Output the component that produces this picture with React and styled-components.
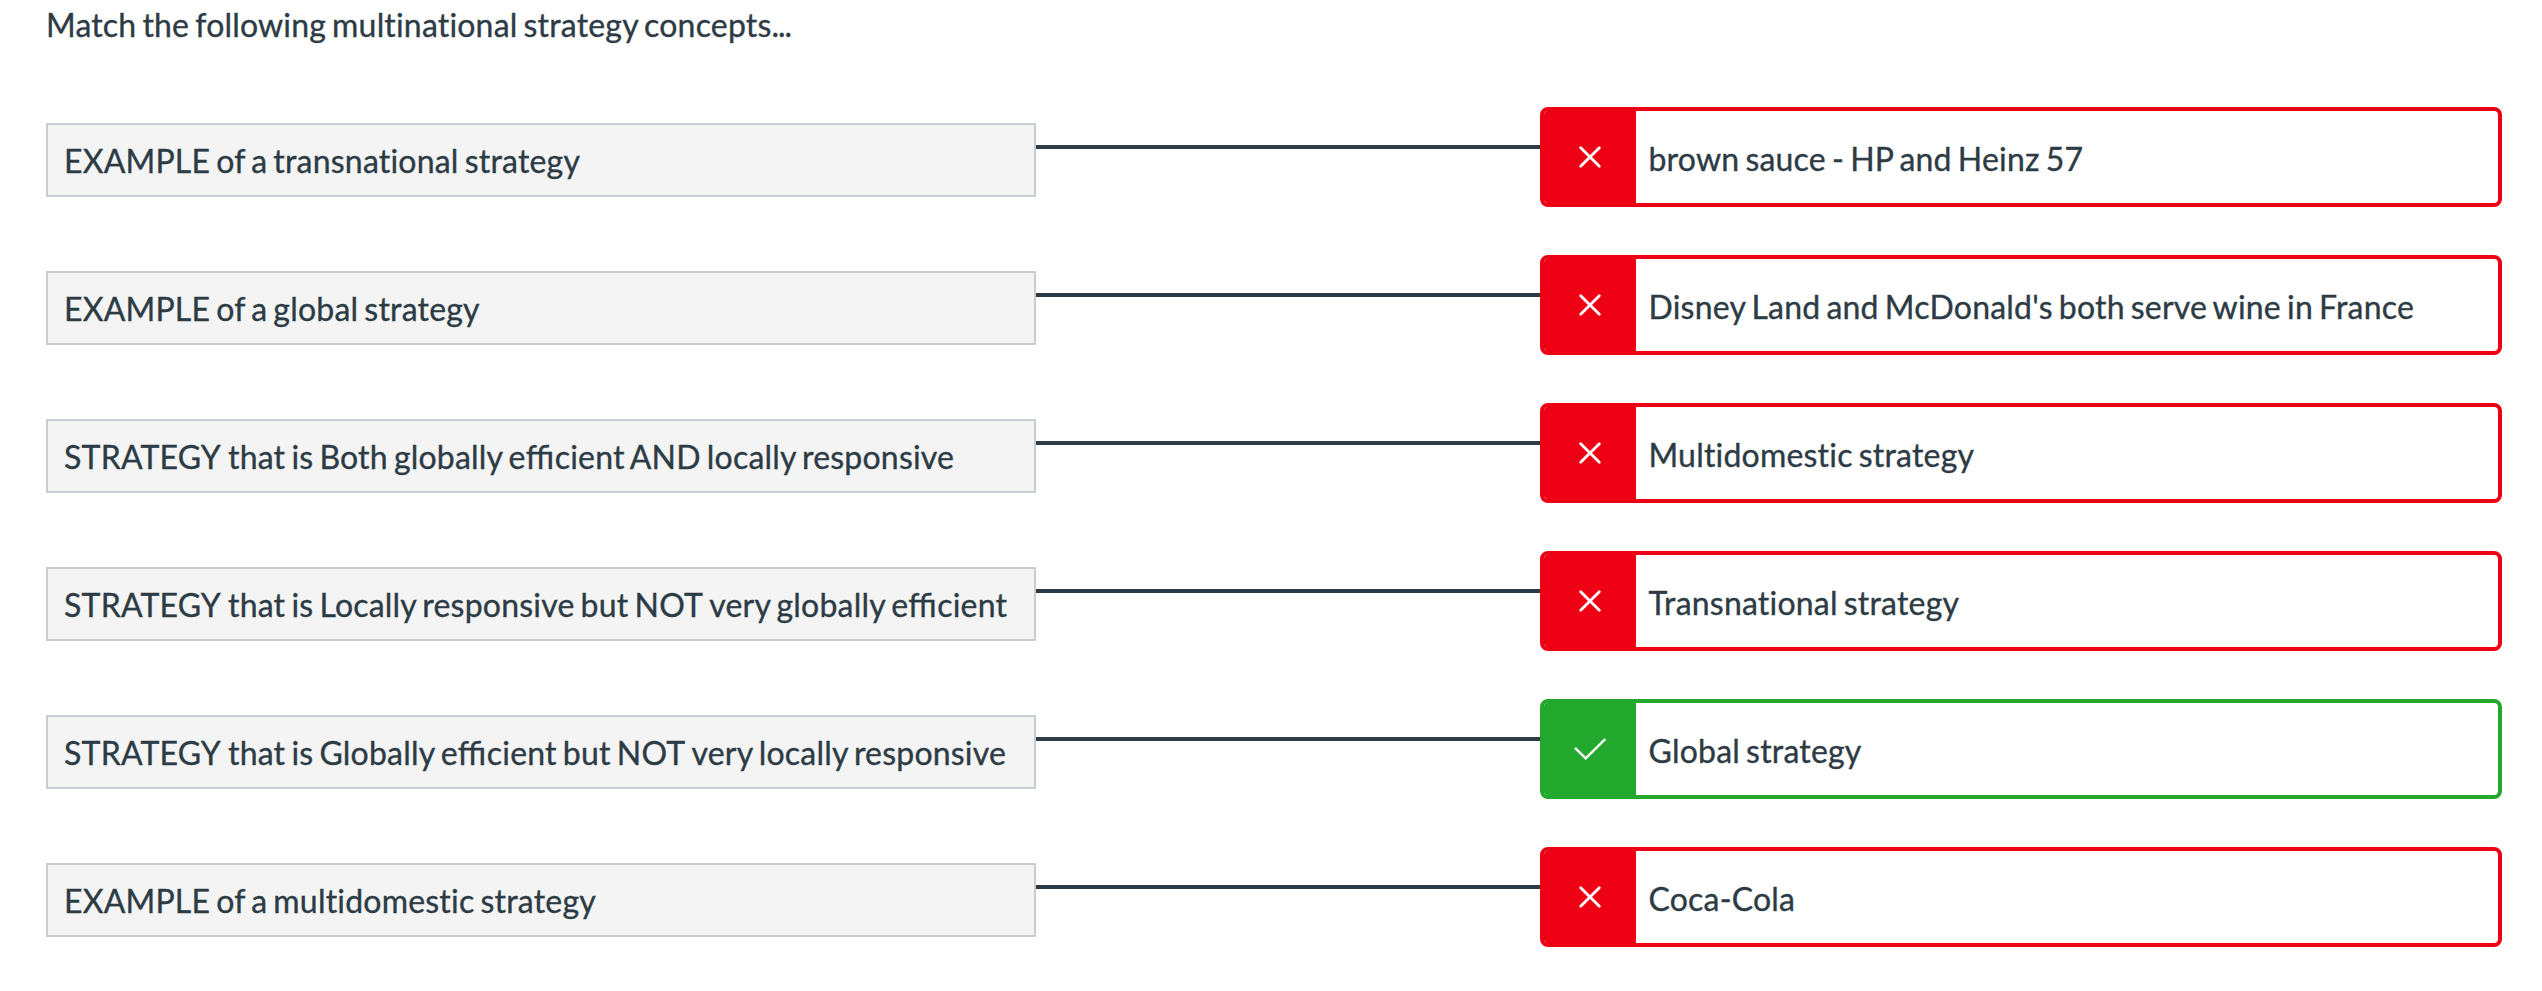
import React from 'react'
import styled, { createGlobalStyle } from 'styled-components'

const pairs = [
  {
    prompt: 'EXAMPLE of a transnational strategy',
    answer: 'brown sauce - HP and Heinz 57',
  },
  {
    prompt: 'EXAMPLE of a global strategy',
    answer: "Disney Land and McDonald's both serve wine in France",
  },
  {
    prompt: 'STRATEGY that is Both globally efficient AND locally responsive',
    answer: 'Multidomestic strategy',
  },
  {
    prompt: 'STRATEGY that is Locally responsive but NOT very globally efficient',
    answer: 'Transnational strategy',
  },
  {
    prompt: 'STRATEGY that is Globally efficient but NOT very locally responsive',
    answer: 'Global strategy',
    correct: true,
  },
  {
    prompt: 'EXAMPLE of a multidomestic strategy',
    answer: 'Coca-Cola',
  },
]

const CrossIcon = () => (
  <svg width='22' height='22' viewBox='0 0 22 22' fill='none'>
    <path
      d='M1.7 1.7 20.3 20.3M20.3 1.7 1.7 20.3'
      stroke='#fff'
      strokeWidth='2.8'
      strokeLinecap='round'
    />
  </svg>
)

const CheckIcon = () => (
  <svg width='32' height='22' viewBox='0 0 32 22' fill='none'>
    <path d='M1 9.8 11.7 20.4 31.2 1' stroke='#fff' strokeWidth='2.4' />
  </svg>
)

// only the ffi ligature is wanted (the font would also join "ti"),
// and capitals should not be kerned into the space after them
const typeset = (text) =>
  text.split(/(ffi|STRATEGY|NOT|\.\.\.)/).map((part, i) => {
    if (part === 'ffi') return <Ligature key={i}>{part}</Ligature>
    if (part === '...') return <Dots key={i}>{part}</Dots>
    return i % 2 ? <Caps key={i}>{part}</Caps> : part
  })

const App = () => {
  return (
    <>
      <GlobalStyle />
      <Page>
        <Question>
          {typeset('Match the following multinational strategy concepts...')}
        </Question>
        <List>
          {pairs.map(({ prompt, answer, correct }) => (
            <Row key={prompt}>
              <Prompt>{typeset(prompt)}</Prompt>
              <Connector />
              <Answer $correct={correct}>
                <Status $correct={correct}>
                  {correct ? <CheckIcon /> : <CrossIcon />}
                </Status>
                <AnswerText>{answer}</AnswerText>
              </Answer>
            </Row>
          ))}
        </List>
      </Page>
    </>
  )
}

const GlobalStyle = createGlobalStyle`
  * {
    box-sizing: border-box;
  }
  body {
    margin: 0;
    background: #fff;
    color: #2d3b45;
    font-family: Lato, sans-serif;
    font-size: 32px;
    line-height: 48px;
    letter-spacing: 0.2px;
    word-spacing: -2.3px;
    font-variant-ligatures: none;
    -webkit-text-stroke: 0.35px #2d3b45;
  }
`

const Page = styled.main`
  height: 991px;
  padding: 1px 40px 0 46px;
  overflow: hidden;
`

const Question = styled.p`
  margin: 0;
  letter-spacing: 0.18px;
`

const List = styled.ul`
  display: grid;
  row-gap: 48px;
  margin: 58px 0 0;
  padding: 0;
  list-style: none;
`

const Row = styled.li`
  display: flex;
  height: 100px;
`

const Prompt = styled.div`
  width: 990px;
  height: 74px;
  margin-top: 16px;
  padding: 12px 16px;
  border: 2px solid #c7cdd1;
  background: #f4f4f4;
  white-space: nowrap;
`

const Ligature = styled.span`
  letter-spacing: 0;
  margin-right: 0.6px;
  font-variant-ligatures: common-ligatures;
`

const Caps = styled.span`
  margin-right: 0.9px;
`

const Dots = styled.span`
  letter-spacing: -1.1px;
`

const Connector = styled.div`
  flex: 1;
  height: 4px;
  margin-top: 38px;
  background: #2d3b45;
`

const Answer = styled.div`
  display: flex;
  width: 962px;
  height: 100px;
  border: 4px solid ${({ $correct }) => ($correct ? '#22a92d' : '#ee0014')};
  border-radius: 8px;
  background: #fff;
  overflow: hidden;
`

const Status = styled.span`
  display: grid;
  place-items: center;
  width: 92px;
  background: ${({ $correct }) => ($correct ? '#22a92d' : '#ee0014')};
`

const AnswerText = styled.span`
  padding: 24px 0 0 12.5px;
  white-space: nowrap;
`

export default App
